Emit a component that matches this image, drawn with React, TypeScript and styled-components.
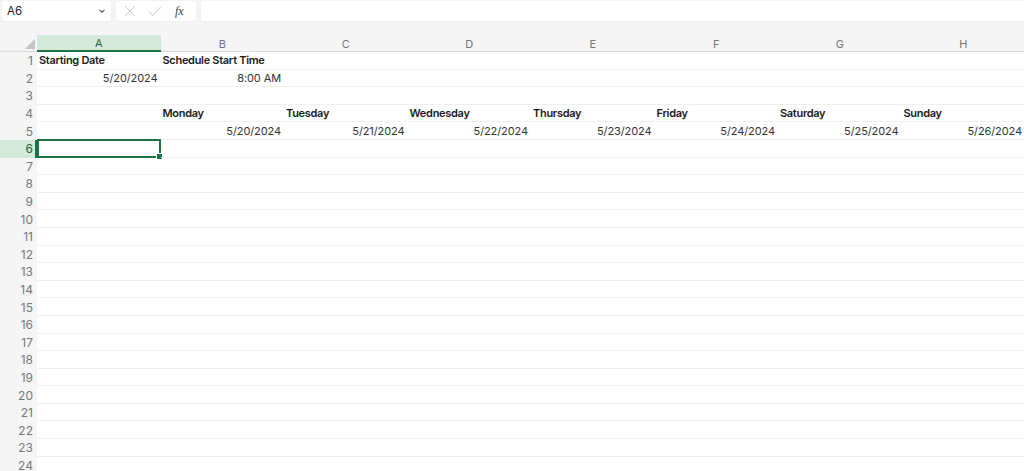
import React from "react";
import styled, { createGlobalStyle } from "styled-components";

const COLS = ["A", "B", "C", "D", "E", "F", "G", "H"];
const ROW_COUNT = 24;
const DAYS = ["Monday", "Tuesday", "Wednesday", "Thursday", "Friday", "Saturday", "Sunday"];
const DATES = ["5/20/2024", "5/21/2024", "5/22/2024", "5/23/2024", "5/24/2024", "5/25/2024", "5/26/2024"];

type CellData = { text: string; bold?: boolean; right?: boolean };

// sheet contents, keyed by "A1" etc
const cells: Record<string, CellData> = {
    A1: { text: "Starting Date", bold: true },
    B1: { text: "Schedule Start Time", bold: true },
    A2: { text: "5/20/2024", right: true },
    B2: { text: "8:00 AM", right: true },
};
DAYS.forEach((d, i) => {
    cells[COLS[i + 1] + "4"] = { text: d, bold: true };
    cells[COLS[i + 1] + "5"] = { text: DATES[i], right: true };
});

const selected = { col: "A", row: 6 };

const GlobalStyle = createGlobalStyle`
    html, body {
        margin: 0;
        padding: 0;
        background: #ffffff;
        overflow: hidden;
    }
    body {
        font-family: Inter, "Liberation Sans", sans-serif;
    }
`;

const App = () => {
    return (
        <>
            <GlobalStyle />
            <Page>
                <FormulaBar>
                    <NameBox>
                        <span>A6</span>
                        <svg width="8" height="6" viewBox="0 0 8 6">
                            <path d="M1.5 1.8 L4 4.2 L6.5 1.8" fill="none" stroke="#555" strokeWidth="1.1" />
                        </svg>
                    </NameBox>
                    <ActionBox>
                        <svg width="12" height="12" viewBox="0 0 12 12">
                            <path d="M1 1 L11 11 M11 1 L1 11" stroke="#c8c8c8" strokeWidth="1" />
                        </svg>
                        <svg width="14" height="12" viewBox="0 0 14 12">
                            <path d="M1 6.5 L4.5 10.5 L13 1.5" fill="none" stroke="#c8c8c8" strokeWidth="1" />
                        </svg>
                        <Fx>fx</Fx>
                    </ActionBox>
                    <FormulaInput />
                </FormulaBar>
                <Gap />
                <Sheet>
                    <Corner>
                        <svg width="10" height="10" viewBox="0 0 10 10">
                            <path d="M10 0 L10 10 L0 10 Z" fill="#c4c4c4" />
                        </svg>
                    </Corner>
                    {COLS.map((c) => (
                        <ColHeader key={c} active={c === selected.col}>{c}</ColHeader>
                    ))}
                    {Array.from({ length: ROW_COUNT }, (_, r) => {
                        const row = r + 1;
                        return (
                            <React.Fragment key={row}>
                                <RowHeader active={row === selected.row}>{row}</RowHeader>
                                {COLS.map((c) => {
                                    const data = cells[c + row];
                                    const isSel = c === selected.col && row === selected.row;
                                    return (
                                        <Cell key={c} bold={data?.bold} right={data?.right}>
                                            {data?.text}
                                            {isSel && <Selection><Handle /></Selection>}
                                        </Cell>
                                    );
                                })}
                            </React.Fragment>
                        );
                    })}
                </Sheet>
            </Page>
        </>
    );
};

const Page = styled.div`
    width: 1024px;
    height: 471px;
    overflow: hidden;
    background: #ffffff;
`;

const FormulaBar = styled.div`
    display: flex;
    align-items: stretch;
    gap: 5px;
    height: 23px;
    padding: 1px 0 0 2px;
    box-sizing: border-box;
    background: #f3f3f3;
`;

const NameBox = styled.div`
    width: 109px;
    height: 20px;
    box-sizing: border-box;
    background: #ffffff;
    border-radius: 3px;
    display: flex;
    align-items: center;
    justify-content: space-between;
    padding: 0 5px 0 5px;
    font-size: 11.5px;
    color: #222;
`;

const ActionBox = styled.div`
    width: 80px;
    height: 20px;
    background: #ffffff;
    border-radius: 3px;
    display: flex;
    align-items: center;
    gap: 12px;
    padding-left: 8px;
    box-sizing: border-box;
`;

const Fx = styled.span`
    font-family: "Liberation Serif", serif;
    font-style: italic;
    font-size: 12px;
    color: #444;
    margin-left: 1px;
`;

const FormulaInput = styled.div`
    flex: 1;
    height: 20px;
    background: #ffffff;
    border-radius: 3px 0 0 3px;
`;

const Gap = styled.div`
    height: 12px;
    background: #f5f5f5;
`;

const Sheet = styled.div`
    display: grid;
    grid-template-columns: 37px repeat(${COLS.length}, 123.5px);
    grid-template-rows: 17px repeat(${ROW_COUNT}, 17.6px);
`;

const Corner = styled.div`
    background: #f5f5f5;
    border-bottom: 1px solid #dcdcdc;
    display: flex;
    align-items: flex-end;
    justify-content: flex-end;
    padding: 0 2px 2px 0;
    box-sizing: border-box;
`;

const ColHeader = styled.div<{ active?: boolean }>`
    background: ${(p) => (p.active ? "#d3eadb" : "#f5f5f5")};
    border-bottom: ${(p) => (p.active ? "2px solid #1e7145" : "1px solid #dcdcdc")};
    box-sizing: border-box;
    display: flex;
    align-items: center;
    justify-content: center;
    font-size: 11px;
    color: ${(p) => (p.active ? "#2a5e3e" : "#777")};
    padding-top: 1px;
`;

const RowHeader = styled.div<{ active?: boolean }>`
    background: ${(p) => (p.active ? "#d3eadb" : "#f5f5f5")};
    border-right: ${(p) => (p.active ? "2px solid #1e7145" : "none")};
    box-sizing: border-box;
    display: flex;
    align-items: center;
    justify-content: flex-end;
    padding-right: ${(p) => (p.active ? "2px" : "4px")};
    font-size: 12px;
    color: ${(p) => (p.active ? "#2a5e3e" : "#777")};
`;

const Cell = styled.div<{ bold?: boolean; right?: boolean }>`
    position: relative;
    border-bottom: 1px solid #f0f0f0;
    box-sizing: border-box;
    display: flex;
    align-items: center;
    justify-content: ${(p) => (p.right ? "flex-end" : "flex-start")};
    padding: 0 3px 0 2px;
    font-size: 11px;
    letter-spacing: ${(p) => (p.bold ? "-0.3px" : "-0.1px")};
    font-weight: ${(p) => (p.bold ? 600 : 400)};
    color: ${(p) => (p.bold ? "#1a1a1a" : "#333")};
    white-space: nowrap;
    overflow: visible;
`;

const Selection = styled.div`
    position: absolute;
    left: 0;
    top: -1px;
    right: 0;
    bottom: -1px;
    border: 2px solid #1e7145;
    pointer-events: none;
`;

const Handle = styled.div`
    position: absolute;
    right: -4px;
    bottom: -4px;
    width: 5px;
    height: 5px;
    background: #1e7145;
    border: 1px solid #ffffff;
`;

export default App;
